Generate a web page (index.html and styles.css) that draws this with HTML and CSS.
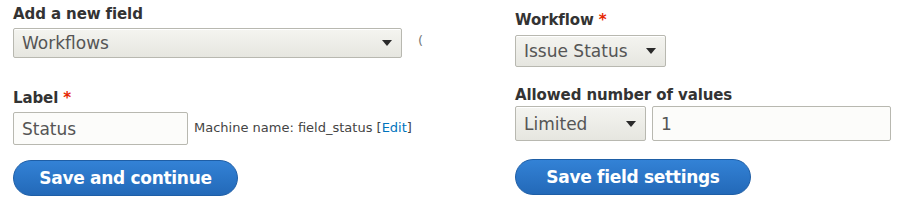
FILE: index.html
```html
<!DOCTYPE html>
<html>
<head>
<meta charset="utf-8">
<link rel="stylesheet" href="styles.css">
</head>
<body>
<div class="page">
  <div class="col col-left">
    <div class="item item-add">
      <div class="label">Add a new field</div>
      <div class="row">
        <div class="select select-wide"><span>Workflows</span><i class="caret"></i></div>
        <span class="or">(</span>
      </div>
    </div>
    <div class="item item-label">
      <div class="label">Label <span class="req">*</span></div>
      <div class="row">
        <div class="input input-status">Status</div>
        <span class="machine">Machine name: field_status [<a class="edit">Edit</a>]</span>
      </div>
    </div>
    <div class="button btn-left">Save and continue</div>
  </div>
  <div class="col col-right">
    <div class="item item-workflow">
      <div class="label">Workflow <span class="req">*</span></div>
      <div class="row">
        <div class="select select-issue"><span>Issue Status</span><i class="caret"></i></div>
      </div>
    </div>
    <div class="item item-allowed">
      <div class="label">Allowed number of values</div>
      <div class="row">
        <div class="select select-limited"><span>Limited</span><i class="caret"></i></div>
        <div class="input input-one">1</div>
      </div>
    </div>
    <div class="button btn-right">Save field settings</div>
  </div>
</div>
</body>
</html>
```
FILE: styles.css
```css
html, body {
  margin: 0;
  padding: 0;
  background: #ffffff;
}
body {
  font-family: "DejaVu Sans", "Liberation Sans", sans-serif;
  color: #333333;
}
.page {
  display: flex;
  width: 910px;
  height: 216px;
}
.col {
  display: flex;
  flex-direction: column;
}
.col-left {
  width: 502px;
  padding-left: 13px;
}
.label {
  font-weight: bold;
  font-size: 15px;
  line-height: 18px;
  color: #333333;
  letter-spacing: -0.1px;
}
.req {
  color: #e62600;
}
.row {
  display: flex;
  align-items: center;
}
.select {
  box-sizing: border-box;
  display: flex;
  align-items: center;
  justify-content: space-between;
  border: 1px solid #b8b8b0;
  border-radius: 2px;
  background: linear-gradient(#f4f4f0, #e6e6e0);
  color: #555555;
  font-size: 17px;
  padding: 0 9px 0 8px;
  box-shadow: inset 0 1px 0 #ffffff;
}
.caret {
  width: 0;
  height: 0;
  border-left: 5px solid transparent;
  border-right: 5px solid transparent;
  border-top: 6px solid #2a2a2a;
}
.input {
  box-sizing: border-box;
  display: flex;
  align-items: center;
  border: 1px solid #b8b8b0;
  border-radius: 2px;
  background: #fcfcfa;
  color: #555555;
  font-size: 17px;
  padding: 0 8px;
}
.item-add {
  margin-top: 5px;
}
.select-wide {
  width: 389px;
  height: 30px;
  margin-top: 5px;
}
.or {
  margin-left: 16px;
  font-size: 13px;
  color: #777777;
}
.item-label {
  margin-top: 31px;
}
.input-status {
  width: 175px;
  height: 33px;
  margin-top: 5px;
}
.machine {
  margin-left: 6px;
  font-size: 13px;
  color: #444444;
  margin-top: 3px;
}
.edit {
  color: #0074bd;
}
.button {
  box-sizing: border-box;
  display: flex;
  align-items: center;
  justify-content: center;
  height: 36px;
  border-radius: 18px;
  background: linear-gradient(#3382d6, #2369b8);
  border: 1px solid #1e5ea6;
  color: #ffffff;
  font-weight: bold;
  font-size: 17px;
  letter-spacing: -0.3px;
}
.btn-left {
  width: 225px;
  margin-top: 15px;
}
.item-workflow {
  margin-top: 11px;
}
.select-issue {
  width: 151px;
  height: 32px;
  margin-top: 6px;
}
.item-allowed {
  margin-top: 19px;
}
.select-limited {
  width: 131px;
  height: 35px;
  margin-top: 2px;
}
.input-one {
  width: 239px;
  height: 35px;
  margin-top: 2px;
  margin-left: 6px;
}
.btn-right {
  width: 236px;
  margin-top: 18px;
}
```
